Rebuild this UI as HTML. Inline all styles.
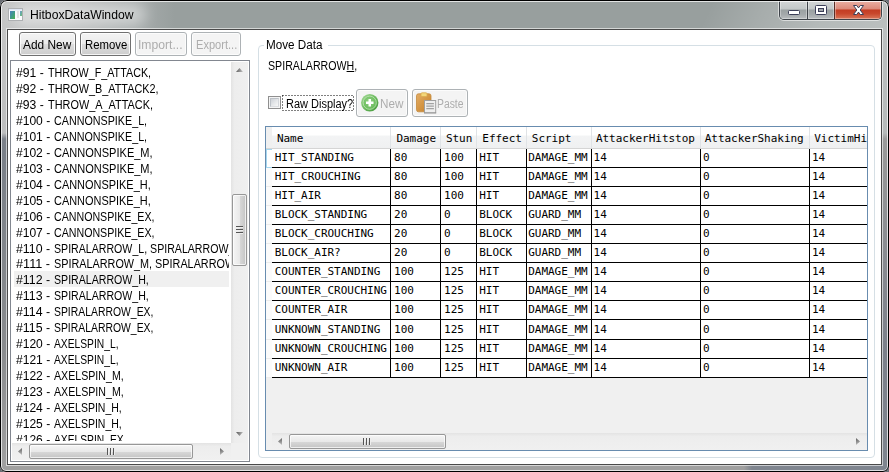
<!DOCTYPE html>
<html>
<head>
<meta charset="utf-8">
<title>HitboxDataWindow</title>
<style>
html,body{margin:0;padding:0;}
body{width:889px;height:472px;overflow:hidden;background:#6a6e74;position:relative;font-family:"Liberation Sans",sans-serif;font-size:12px;color:#000;}
.abs{position:absolute;}
#win{position:absolute;left:0;top:0;width:889px;height:472px;border-radius:7px 7px 6px 6px;overflow:hidden;background:#989f9e;}
#edge{position:absolute;left:0;top:0;width:887px;height:470px;border:1px solid #000;border-radius:7px 7px 6px 6px;box-shadow:inset 0 0 0 1px rgba(255,255,255,.72);pointer-events:none;}
/* title bar glass */
#tb{position:absolute;left:0;top:0;width:889px;height:29px;
 background:
  linear-gradient(115deg,rgba(255,255,255,0) 0,rgba(255,255,255,0) 79%,rgba(255,255,255,.14) 85%,rgba(255,255,255,.28) 92%,rgba(255,255,255,.34) 100%),
  linear-gradient(to right,#c5c6c6 0,#c1c3c3 60px,#a9aeae 130px,#989f9e 175px,#989f9e 100%);}
#glow{position:absolute;left:14px;top:4px;width:132px;height:21px;border-radius:10px;background:rgba(255,255,255,.45);filter:blur(7px);}
#fl{position:absolute;left:0;top:29px;width:8px;height:443px;background:linear-gradient(to bottom,#c4c5c5 0,#bdbebe 104px,#7c8189 110px,#7a8088 125px,#8a8c8e 321px,#a0a0a0 436px,#a0a0a0 100%);}
#fr{position:absolute;left:881px;top:29px;width:8px;height:443px;background:linear-gradient(to bottom,#bcc0c0 0,#b6baba 104px,#9b9b9b 110px,#989898 125px,#7c808a 321px,#7f858f 100%);}
#fb{position:absolute;left:0;top:464px;width:889px;height:8px;background:linear-gradient(to right,#a0a0a0 0,#a0a0a0 744px,#7f858f 752px,#7f858f 100%);}
#client{position:absolute;left:7px;top:29px;width:873px;height:434px;border:1px solid #4a4a4a;outline:1px solid rgba(255,255,255,.58);background:#fff;}
#title{position:absolute;left:29px;top:6px;height:16px;line-height:16px;font-size:12px;white-space:nowrap;color:#000;}
/* caption buttons */
#cap{position:absolute;left:779px;top:1px;width:101px;height:18px;border:1px solid #3f444a;border-top:none;border-radius:0 0 5px 5px;overflow:hidden;box-shadow:0 0 0 1px rgba(255,255,255,.55);}
#cap div{position:absolute;top:0;height:18px;box-shadow:inset 0 0 0 1px rgba(255,255,255,.35);}
#cmin{left:0;width:27px;background:linear-gradient(to bottom,#d3d6d6 0,#c3c8c8 44%,#9ba1a2 50%,#a4a9ab 75%,#b9bdbf 100%);border-right:1px solid #3f444a;}
#cmax{left:28px;width:26px;background:linear-gradient(to bottom,#d3d6d6 0,#c3c8c8 44%,#9ba1a2 50%,#a4a9ab 75%,#b9bdbf 100%);border-right:1px solid #5a2d25;}
#ccl{left:55px;width:46px;background:linear-gradient(to bottom,#eab0a3 0,#dc8a7a 44%,#c33d23 50%,#c8472c 70%,#d9775a 100%);}
#capg{position:absolute;left:779px;top:0;}
#ico{position:absolute;left:8px;top:8px;}
#pg{position:absolute;left:-8px;top:-30px;width:889px;height:472px;}
/* generic controls */
.btn{position:absolute;box-sizing:border-box;border:1px solid #707070;border-radius:3px;background:linear-gradient(to bottom,#f3f3f3 0,#ebebeb 50%,#dddddd 50%,#cdcdcd 100%);box-shadow:inset 0 0 0 1px rgba(255,255,255,.8);text-align:center;white-space:nowrap;}
.btn.dis{border-color:#adb2b5;background:#f4f4f4;color:#adadad;box-shadow:inset 0 0 0 1px #fcfcfc;}
.t{position:absolute;display:block;white-space:nowrap;line-height:16px;height:16px;transform-origin:0 0;}
/* listbox */
#lb{position:absolute;left:10px;top:60px;width:238px;height:400px;border:1px solid #828790;background:#fff;overflow:hidden;}
#lbv{position:absolute;left:1px;top:1px;width:217px;height:379px;overflow:hidden;}
.li{position:absolute;left:0;width:217px;height:16px;line-height:16px;white-space:nowrap;}
.li.sel:before{content:"";position:absolute;left:2px;top:0;width:215px;height:16px;background:#f0f0f0;}
.sbv{position:absolute;background:linear-gradient(to right,#e3e3e3 0,#ededed 20%,#f0f0f0 100%);}
.sbh{position:absolute;background:linear-gradient(to bottom,#e3e3e3 0,#ededed 20%,#f0f0f0 100%);}
.thh{position:absolute;box-sizing:border-box;border:1px solid #979797;border-radius:2px;background:linear-gradient(to bottom,#f5f5f5 0,#e9e9e9 50%,#d9d9d9 50%,#c4c4c4 100%);box-shadow:inset 0 0 0 1px rgba(255,255,255,.7);}
.thv{position:absolute;box-sizing:border-box;border:1px solid #979797;border-radius:2px;background:linear-gradient(to right,#f5f5f5 0,#e9e9e9 50%,#d9d9d9 50%,#c4c4c4 100%);box-shadow:inset 0 0 0 1px rgba(255,255,255,.7);}
.au,.ad{position:absolute;width:7px;height:4px;background:linear-gradient(100deg,#676767 15%,#bdbdbd 95%);}
.al,.ar{position:absolute;width:4px;height:7px;background:linear-gradient(170deg,#6b6b6b 15%,#bdbdbd 95%);}
.au{clip-path:polygon(50% 0,100% 100%,0 100%);}
.ad{clip-path:polygon(0 0,100% 0,50% 100%);}
.al{clip-path:polygon(100% 0,100% 100%,0 50%);}
.ar{clip-path:polygon(0 0,100% 50%,0 100%);}
/* groupbox */
#gb{position:absolute;left:258px;top:45px;width:615px;height:411px;border:1px solid #d5dfe5;border-radius:4px;box-shadow:inset 0 0 0 1px #fff;}
#gbh{position:absolute;left:264px;top:36px;width:64px;height:18px;background:#fff;}
#cb{position:absolute;left:268px;top:96px;width:11px;height:11px;border:1px solid #8f8f8f;background:#f4f4f4;}
#cb:after{content:"";position:absolute;left:1px;top:1px;width:7px;height:7px;border:1px solid #bcc1c7;border-right-color:#d4d7db;border-bottom-color:#dcdee1;background:linear-gradient(135deg,#cdd1d7 0,#e6e8ea 55%,#f7f7f7 100%);}
.griph{position:absolute;width:8px;height:7px;background:linear-gradient(to right,#555 0,#555 1px,#eee 1px,#eee 2px,transparent 2px,transparent 3px,#555 3px,#555 4px,#eee 4px,#eee 5px,transparent 5px,transparent 6px,#555 6px,#555 7px,#eee 7px,#eee 8px);}
.gripv{position:absolute;width:7px;height:8px;background:linear-gradient(to bottom,#555 0,#555 1px,#eee 1px,#eee 2px,transparent 2px,transparent 3px,#555 3px,#555 4px,#eee 4px,#eee 5px,transparent 5px,transparent 6px,#555 6px,#555 7px,#eee 7px,#eee 8px);}
/* datagrid */
#dg{position:absolute;left:265px;top:126px;width:601px;height:323px;border:1px solid #688caf;background:#f0f0f0;overflow:hidden;font-family:"DejaVu Sans Mono","Liberation Mono",monospace;font-size:11px;letter-spacing:-0.02px;}
#dgh{position:absolute;left:0;top:0;width:601px;height:22px;background:linear-gradient(to bottom,#ffffff 0,#ffffff 40%,#f3f4f5 41%,#eff0f1 100%);border-bottom:1px solid #d5d5d5;box-sizing:border-box;}
.hc{position:absolute;top:0;height:21px;box-sizing:border-box;border-right:1px solid #e0e3e6;overflow:hidden;white-space:nowrap;}
.hc span{position:absolute;top:5px;line-height:14px;}
.row{position:absolute;left:0;width:601px;height:19px;}
.rh{position:absolute;left:0;top:0;width:6px;height:18px;background:#fbfbfb;border-bottom:1px solid #ececec;}
.rh.cur{left:0;width:5px;height:17px;background:#fff;border:1px solid #a5d7f0;border-right:none;}
#dgc{position:absolute;left:0;top:0;width:6px;height:21px;background:#f0f0f0;}
.c{position:absolute;top:0;height:18px;box-sizing:content-box;background:#fff;border-right:1px solid #000;border-bottom:1px solid #000;overflow:hidden;white-space:nowrap;}
.c span{position:absolute;top:2px;line-height:14px;}
</style>
</head>
<body>
<div id="win">
 <div id="tb"><div id="glow"></div></div>
 <div id="fl"></div><div id="fr"></div><div id="fb"></div>
 <!--TITLE--><span class="t" style="left:29.50px;top:7px;transform:scaleX(1.0139);">HitboxDataWindow</span><!--/TITLE-->
 <div id="cap"><div id="cmin"></div><div id="cmax"></div><div id="ccl"></div></div>
 <svg id="capg" width="103" height="20" viewBox="779 0 103 20"><rect x="788.5" y="10.5" width="11" height="4" rx="1" fill="#fff" stroke="#3c3f58"/><rect x="815.5" y="5.5" width="11" height="9" rx="1" fill="#fff" stroke="#3c3f58"/><rect x="818.5" y="8.5" width="5" height="3" fill="#a3a7ab" stroke="#3c3f58"/><path d="M853.5 5.5h3.2l1.8 2.4 1.8-2.4h3.2l-3.3 4.5 3.3 4.5h-3.2l-1.8-2.4-1.8 2.4h-3.2l3.3-4.5z" fill="#fff" stroke="#3c3f58" stroke-linejoin="round"/></svg>
 <svg id="ico" width="15" height="13" viewBox="0 0 15 13"><defs><linearGradient id="ig" x1="0" y1="0" x2="1" y2="1"><stop offset="0" stop-color="#4f7fc0"/><stop offset=".5" stop-color="#3f9a8a"/><stop offset="1" stop-color="#4fb04a"/></linearGradient></defs><rect x=".5" y=".5" width="14" height="12" fill="#fbfbfd" stroke="#aeb0b2"/><rect x="1" y="1" width="13" height="1.5" fill="#dfe6f3"/><rect x="2" y="3" width="5" height="8" fill="url(#ig)"/><rect x="9" y="3" width="2" height="7" fill="#e3e3e3"/><rect x="12" y="3" width="2" height="5" fill="url(#ig)" opacity=".8"/></svg>
 <div id="client"><div id="pg">
<!--CLIENT-->
<div class="btn" style="left:19px;top:32px;width:57px;height:24px"><span class="t" style="left:3.40px;top:4px;transform:scaleX(0.9913);">Add New</span></div>
<div class="btn" style="left:80px;top:32px;width:51px;height:24px"><span class="t" style="left:3.80px;top:4px;transform:scaleX(0.9465);">Remove</span></div>
<div class="btn dis" style="left:135px;top:32px;width:52px;height:24px"><span class="t" style="left:2.49px;top:4px;transform:scaleX(1.0123);">Import...</span></div>
<div class="btn dis" style="left:191px;top:32px;width:50px;height:24px"><span class="t" style="left:3.50px;top:4px;transform:scaleX(0.9222);">Export...</span></div>
<div id="lb"><div id="lbv">
<div class="li" style="top:2px"><span class="t" style="left:4.20px;top:1px;transform:scaleX(1.0134);">#91&nbsp;-&nbsp;</span><span class="t" style="left:35.70px;top:1px;transform:scaleX(0.8974);">THROW_F_ATTACK,</span></div>
<div class="li" style="top:18px"><span class="t" style="left:4.20px;top:1px;transform:scaleX(1.0134);">#92&nbsp;-&nbsp;</span><span class="t" style="left:35.70px;top:1px;transform:scaleX(0.9040);">THROW_B_ATTACK2,</span></div>
<div class="li" style="top:34px"><span class="t" style="left:4.20px;top:1px;transform:scaleX(1.0134);">#93&nbsp;-&nbsp;</span><span class="t" style="left:35.70px;top:1px;transform:scaleX(0.9086);">THROW_A_ATTACK,</span></div>
<div class="li" style="top:50px"><span class="t" style="left:4.20px;top:1px;transform:scaleX(1.0038);">#100&nbsp;-&nbsp;</span><span class="t" style="left:42.10px;top:1px;transform:scaleX(0.8949);">CANNONSPIKE_L,</span></div>
<div class="li" style="top:66px"><span class="t" style="left:4.20px;top:1px;transform:scaleX(1.0038);">#101&nbsp;-&nbsp;</span><span class="t" style="left:42.10px;top:1px;transform:scaleX(0.8949);">CANNONSPIKE_L,</span></div>
<div class="li" style="top:82px"><span class="t" style="left:4.20px;top:1px;transform:scaleX(1.0038);">#102&nbsp;-&nbsp;</span><span class="t" style="left:42.10px;top:1px;transform:scaleX(0.9185);">CANNONSPIKE_M,</span></div>
<div class="li" style="top:97px"><span class="t" style="left:4.20px;top:2px;transform:scaleX(1.0038);">#103&nbsp;-&nbsp;</span><span class="t" style="left:42.10px;top:2px;transform:scaleX(0.9185);">CANNONSPIKE_M,</span></div>
<div class="li" style="top:113px"><span class="t" style="left:4.20px;top:2px;transform:scaleX(1.0038);">#104&nbsp;-&nbsp;</span><span class="t" style="left:42.10px;top:2px;transform:scaleX(0.9121);">CANNONSPIKE_H,</span></div>
<div class="li" style="top:129px"><span class="t" style="left:4.20px;top:2px;transform:scaleX(1.0038);">#105&nbsp;-&nbsp;</span><span class="t" style="left:42.10px;top:2px;transform:scaleX(0.9121);">CANNONSPIKE_H,</span></div>
<div class="li" style="top:145px"><span class="t" style="left:4.20px;top:2px;transform:scaleX(1.0038);">#106&nbsp;-&nbsp;</span><span class="t" style="left:42.10px;top:2px;transform:scaleX(0.8865);">CANNONSPIKE_EX,</span></div>
<div class="li" style="top:161px"><span class="t" style="left:4.20px;top:2px;transform:scaleX(1.0038);">#107&nbsp;-&nbsp;</span><span class="t" style="left:42.10px;top:2px;transform:scaleX(0.8865);">CANNONSPIKE_EX,</span></div>
<div class="li" style="top:177px"><span class="t" style="left:4.20px;top:2px;transform:scaleX(1.0283);">#110&nbsp;-&nbsp;</span><span class="t" style="left:42.10px;top:2px;transform:scaleX(0.8838);">SPIRALARROW_L, SPIRALARROW_L,</span></div>
<div class="li" style="top:193px"><span class="t" style="left:4.20px;top:1px;transform:scaleX(1.0540);">#111&nbsp;-&nbsp;</span><span class="t" style="left:42.10px;top:1px;transform:scaleX(0.9026);">SPIRALARROW_M, SPIRALARROW_M,</span></div>
<div class="li sel" style="top:209px"><span class="t" style="left:4.20px;top:1px;transform:scaleX(1.0283);">#112&nbsp;-&nbsp;</span><span class="t" style="left:42.10px;top:1px;transform:scaleX(0.8830);">SPIRALARROW_H,</span></div>
<div class="li" style="top:225px"><span class="t" style="left:4.20px;top:1px;transform:scaleX(1.0283);">#113&nbsp;-&nbsp;</span><span class="t" style="left:42.10px;top:1px;transform:scaleX(0.8830);">SPIRALARROW_H,</span></div>
<div class="li" style="top:241px"><span class="t" style="left:4.20px;top:1px;transform:scaleX(1.0283);">#114&nbsp;-&nbsp;</span><span class="t" style="left:42.10px;top:1px;transform:scaleX(0.8665);">SPIRALARROW_EX,</span></div>
<div class="li" style="top:257px"><span class="t" style="left:4.20px;top:1px;transform:scaleX(1.0283);">#115&nbsp;-&nbsp;</span><span class="t" style="left:42.10px;top:1px;transform:scaleX(0.8665);">SPIRALARROW_EX,</span></div>
<div class="li" style="top:273px"><span class="t" style="left:4.20px;top:1px;transform:scaleX(1.0038);">#120&nbsp;-&nbsp;</span><span class="t" style="left:42.10px;top:1px;transform:scaleX(0.8555);">AXELSPIN_L,</span></div>
<div class="li" style="top:289px"><span class="t" style="left:4.20px;top:1px;transform:scaleX(1.0038);">#121&nbsp;-&nbsp;</span><span class="t" style="left:42.10px;top:1px;transform:scaleX(0.8555);">AXELSPIN_L,</span></div>
<div class="li" style="top:305px"><span class="t" style="left:4.20px;top:1px;transform:scaleX(1.0038);">#122&nbsp;-&nbsp;</span><span class="t" style="left:42.10px;top:1px;transform:scaleX(0.8856);">AXELSPIN_M,</span></div>
<div class="li" style="top:321px"><span class="t" style="left:4.20px;top:1px;transform:scaleX(1.0038);">#123&nbsp;-&nbsp;</span><span class="t" style="left:42.10px;top:1px;transform:scaleX(0.8856);">AXELSPIN_M,</span></div>
<div class="li" style="top:337px"><span class="t" style="left:4.20px;top:1px;transform:scaleX(1.0038);">#124&nbsp;-&nbsp;</span><span class="t" style="left:42.10px;top:1px;transform:scaleX(0.8762);">AXELSPIN_H,</span></div>
<div class="li" style="top:353px"><span class="t" style="left:4.20px;top:1px;transform:scaleX(1.0038);">#125&nbsp;-&nbsp;</span><span class="t" style="left:42.10px;top:1px;transform:scaleX(0.8762);">AXELSPIN_H,</span></div>
<div class="li" style="top:369px"><span class="t" style="left:4.20px;top:1px;transform:scaleX(1.0038);">#126&nbsp;-&nbsp;</span><span class="t" style="left:42.10px;top:1px;transform:scaleX(0.8557);">AXELSPIN_EX,</span></div>
</div>
<div class="sbv" style="left:220px;top:1px;width:17px;height:381px"></div>
<div class="au" style="left:225px;top:7px"></div>
<div class="ad" style="left:225px;top:371px"></div>
<div class="thv" style="left:221px;top:133px;width:15px;height:72px"></div>
<div class="gripv" style="left:225px;top:165px"></div>
<div class="sbh" style="left:1px;top:382px;width:219px;height:17px"></div>
<div class="al" style="left:7px;top:387px"></div>
<div class="ar" style="left:209px;top:387px"></div>
<div class="thh" style="left:18px;top:383px;width:164px;height:15px"></div>
<div class="griph" style="left:96px;top:387px"></div>
<div class="abs" style="left:220px;top:382px;width:17px;height:17px;background:#f0f0f0"></div>
</div>
<div id="gb"></div>
<div id="gbh"></div>
<span class="t" style="left:266.40px;top:37px;transform:scaleX(0.9734);">Move Data</span>
<span class="t" style="left:268.30px;top:58px;transform:scaleX(0.8859);">SPIRALARROW<u>H</u>,</span>
<div id="cb"></div>
<svg class="abs" style="left:282px;top:95px" width="72" height="16" viewBox="0 0 72 16"><rect x=".5" y=".5" width="71" height="15" fill="none" stroke="#000" stroke-width="1" stroke-dasharray="1 2"/></svg>
<span class="t" style="left:285.80px;top:96px;transform:scaleX(0.9161);">Raw Display?</span>
<div class="btn dis" style="left:356px;top:89px;width:52px;height:28px"><svg class="abs" style="left:3px;top:3px" width="20" height="20" viewBox="0 0 20 20"><defs><linearGradient id="g1" x1="0" y1="0" x2="1" y2="1"><stop offset="0" stop-color="#a9dc9b"/><stop offset=".5" stop-color="#6cba5e"/><stop offset="1" stop-color="#3f9436"/></linearGradient><radialGradient id="g2" cx="45%" cy="40%" r="60%"><stop offset="0" stop-color="#8fd281"/><stop offset="1" stop-color="#68b95a"/></radialGradient></defs><circle cx="9.75" cy="9.75" r="8.7" fill="url(#g1)"/><circle cx="9.75" cy="9.75" r="6.6" fill="url(#g2)" stroke="#bfe6b5" stroke-width=".8"/><path d="M8.5 6h2.5v2.5h2.5v2.5h-2.5v2.5H8.5v-2.5H6V8.5h2.5z" fill="#fff"/></svg><span class="t" style="left:23.10px;top:6px;transform:scaleX(0.9737);">New</span></div>
<div class="btn dis" style="left:412px;top:89px;width:56px;height:28px"><svg class="abs" style="left:2px;top:2px" width="22" height="22" viewBox="0 0 22 22"><defs><linearGradient id="p1" x1="0" y1="0" x2="1" y2="1"><stop offset="0" stop-color="#e3ad66"/><stop offset=".6" stop-color="#d2923f"/><stop offset="1" stop-color="#bd7a2a"/></linearGradient></defs><rect x="1.5" y="1.8" width="14.5" height="18" rx="2" fill="url(#p1)" stroke="#c48a3e" stroke-width=".8"/><rect x="6" y=".8" width="6" height="3.8" rx="1" fill="#f3d77a" stroke="#d9a94e" stroke-width=".8"/><rect x="9.5" y="8.5" width="11.2" height="12.3" fill="#efefef" stroke="#a0a0a0" stroke-width="1"/><path d="M9 21h12.2" stroke="#8f8f8f" stroke-width="1" opacity=".7"/><path d="M11.3 11.7h7.6M11.3 14.2h7.6M11.3 16.7h7.6" stroke="#a2a2a2" stroke-width="1.3"/></svg><span class="t" style="left:23.90px;top:6px;transform:scaleX(0.8642);">Paste</span></div>
<div id="dg">
<div id="dgh"><div id="dgc"></div>
<div class="hc" style="left:6px;width:119px"><span style="left:4.9px">Name</span></div>
<div class="hc" style="left:125px;width:50px"><span style="left:5.4px">Damage</span></div>
<div class="hc" style="left:175px;width:36px"><span style="left:4.9px">Stun</span></div>
<div class="hc" style="left:211px;width:50px"><span style="left:5.3px">Effect</span></div>
<div class="hc" style="left:261px;width:65px"><span style="left:4.8px">Script</span></div>
<div class="hc" style="left:326px;width:109px"><span style="left:3.9px">AttackerHitstop</span></div>
<div class="hc" style="left:435px;width:109px"><span style="left:3.7px">AttackerShaking</span></div>
<div class="hc" style="left:544px;width:110px"><span style="left:4.2px">VictimHitstop</span></div>
</div>
<div class="row" style="top:22px;"><div class="rh cur" style=""></div>
<div class="c" style="left:6px;width:118px;"><span style="left:2.7px;">HIT_STANDING</span></div>
<div class="c" style="left:125px;width:49px;"><span style="left:3.1px;">80</span></div>
<div class="c" style="left:175px;width:35px;"><span style="left:3.1px;">100</span></div>
<div class="c" style="left:211px;width:49px;"><span style="left:2.2px;">HIT</span></div>
<div class="c" style="left:261px;width:64px;"><span style="left:1.2px;">DAMAGE_MM</span></div>
<div class="c" style="left:326px;width:108px;"><span style="left:1.6px;">14</span></div>
<div class="c" style="left:435px;width:108px;"><span style="left:2.1px;">0</span></div>
<div class="c" style="left:544px;width:109px;"><span style="left:1.9px;">14</span></div>
</div>
<div class="row" style="top:41px;"><div class="rh" style=""></div>
<div class="c" style="left:6px;width:118px;"><span style="left:2.7px;">HIT_CROUCHING</span></div>
<div class="c" style="left:125px;width:49px;"><span style="left:3.1px;">80</span></div>
<div class="c" style="left:175px;width:35px;"><span style="left:3.1px;">100</span></div>
<div class="c" style="left:211px;width:49px;"><span style="left:2.2px;">HIT</span></div>
<div class="c" style="left:261px;width:64px;"><span style="left:1.2px;">DAMAGE_MM</span></div>
<div class="c" style="left:326px;width:108px;"><span style="left:1.6px;">14</span></div>
<div class="c" style="left:435px;width:108px;"><span style="left:2.1px;">0</span></div>
<div class="c" style="left:544px;width:109px;"><span style="left:1.9px;">14</span></div>
</div>
<div class="row" style="top:60px;"><div class="rh" style=""></div>
<div class="c" style="left:6px;width:118px;"><span style="left:2.7px;">HIT_AIR</span></div>
<div class="c" style="left:125px;width:49px;"><span style="left:3.1px;">80</span></div>
<div class="c" style="left:175px;width:35px;"><span style="left:3.1px;">100</span></div>
<div class="c" style="left:211px;width:49px;"><span style="left:2.2px;">HIT</span></div>
<div class="c" style="left:261px;width:64px;"><span style="left:1.2px;">DAMAGE_MM</span></div>
<div class="c" style="left:326px;width:108px;"><span style="left:1.6px;">14</span></div>
<div class="c" style="left:435px;width:108px;"><span style="left:2.1px;">0</span></div>
<div class="c" style="left:544px;width:109px;"><span style="left:1.9px;">14</span></div>
</div>
<div class="row" style="top:79px;"><div class="rh" style=""></div>
<div class="c" style="left:6px;width:118px;"><span style="left:2.7px;">BLOCK_STANDING</span></div>
<div class="c" style="left:125px;width:49px;"><span style="left:3.1px;">20</span></div>
<div class="c" style="left:175px;width:35px;"><span style="left:3.1px;">0</span></div>
<div class="c" style="left:211px;width:49px;"><span style="left:2.2px;">BLOCK</span></div>
<div class="c" style="left:261px;width:64px;"><span style="left:1.2px;">GUARD_MM</span></div>
<div class="c" style="left:326px;width:108px;"><span style="left:1.6px;">14</span></div>
<div class="c" style="left:435px;width:108px;"><span style="left:2.1px;">0</span></div>
<div class="c" style="left:544px;width:109px;"><span style="left:1.9px;">14</span></div>
</div>
<div class="row" style="top:98px;"><div class="rh" style=""></div>
<div class="c" style="left:6px;width:118px;"><span style="left:2.7px;">BLOCK_CROUCHING</span></div>
<div class="c" style="left:125px;width:49px;"><span style="left:3.1px;">20</span></div>
<div class="c" style="left:175px;width:35px;"><span style="left:3.1px;">0</span></div>
<div class="c" style="left:211px;width:49px;"><span style="left:2.2px;">BLOCK</span></div>
<div class="c" style="left:261px;width:64px;"><span style="left:1.2px;">GUARD_MM</span></div>
<div class="c" style="left:326px;width:108px;"><span style="left:1.6px;">14</span></div>
<div class="c" style="left:435px;width:108px;"><span style="left:2.1px;">0</span></div>
<div class="c" style="left:544px;width:109px;"><span style="left:1.9px;">14</span></div>
</div>
<div class="row" style="top:117px;"><div class="rh" style=""></div>
<div class="c" style="left:6px;width:118px;"><span style="left:2.7px;">BLOCK_AIR?</span></div>
<div class="c" style="left:125px;width:49px;"><span style="left:3.1px;">20</span></div>
<div class="c" style="left:175px;width:35px;"><span style="left:3.1px;">0</span></div>
<div class="c" style="left:211px;width:49px;"><span style="left:2.2px;">BLOCK</span></div>
<div class="c" style="left:261px;width:64px;"><span style="left:1.2px;">GUARD_MM</span></div>
<div class="c" style="left:326px;width:108px;"><span style="left:1.6px;">14</span></div>
<div class="c" style="left:435px;width:108px;"><span style="left:2.1px;">0</span></div>
<div class="c" style="left:544px;width:109px;"><span style="left:1.9px;">14</span></div>
</div>
<div class="row" style="top:136px;"><div class="rh" style=""></div>
<div class="c" style="left:6px;width:118px;"><span style="left:2.7px;">COUNTER_STANDING</span></div>
<div class="c" style="left:125px;width:49px;"><span style="left:3.1px;">100</span></div>
<div class="c" style="left:175px;width:35px;"><span style="left:3.1px;">125</span></div>
<div class="c" style="left:211px;width:49px;"><span style="left:2.2px;">HIT</span></div>
<div class="c" style="left:261px;width:64px;"><span style="left:1.2px;">DAMAGE_MM</span></div>
<div class="c" style="left:326px;width:108px;"><span style="left:1.6px;">14</span></div>
<div class="c" style="left:435px;width:108px;"><span style="left:2.1px;">0</span></div>
<div class="c" style="left:544px;width:109px;"><span style="left:1.9px;">14</span></div>
</div>
<div class="row" style="top:155px;"><div class="rh" style=""></div>
<div class="c" style="left:6px;width:118px;"><span style="left:2.7px;">COUNTER_CROUCHING</span></div>
<div class="c" style="left:125px;width:49px;"><span style="left:3.1px;">100</span></div>
<div class="c" style="left:175px;width:35px;"><span style="left:3.1px;">125</span></div>
<div class="c" style="left:211px;width:49px;"><span style="left:2.2px;">HIT</span></div>
<div class="c" style="left:261px;width:64px;"><span style="left:1.2px;">DAMAGE_MM</span></div>
<div class="c" style="left:326px;width:108px;"><span style="left:1.6px;">14</span></div>
<div class="c" style="left:435px;width:108px;"><span style="left:2.1px;">0</span></div>
<div class="c" style="left:544px;width:109px;"><span style="left:1.9px;">14</span></div>
</div>
<div class="row" style="top:174px;"><div class="rh" style=""></div>
<div class="c" style="left:6px;width:118px;"><span style="left:2.7px;">COUNTER_AIR</span></div>
<div class="c" style="left:125px;width:49px;"><span style="left:3.1px;">100</span></div>
<div class="c" style="left:175px;width:35px;"><span style="left:3.1px;">125</span></div>
<div class="c" style="left:211px;width:49px;"><span style="left:2.2px;">HIT</span></div>
<div class="c" style="left:261px;width:64px;"><span style="left:1.2px;">DAMAGE_MM</span></div>
<div class="c" style="left:326px;width:108px;"><span style="left:1.6px;">14</span></div>
<div class="c" style="left:435px;width:108px;"><span style="left:2.1px;">0</span></div>
<div class="c" style="left:544px;width:109px;"><span style="left:1.9px;">14</span></div>
</div>
<div class="row" style="top:193px;height:19px;"><div class="rh" style="height:19px;"></div>
<div class="c" style="left:6px;width:118px;height:19px;"><span style="left:2.7px;top:3px">UNKNOWN_STANDING</span></div>
<div class="c" style="left:125px;width:49px;height:19px;"><span style="left:3.1px;top:3px">100</span></div>
<div class="c" style="left:175px;width:35px;height:19px;"><span style="left:3.1px;top:3px">125</span></div>
<div class="c" style="left:211px;width:49px;height:19px;"><span style="left:2.2px;top:3px">HIT</span></div>
<div class="c" style="left:261px;width:64px;height:19px;"><span style="left:1.2px;top:3px">DAMAGE_MM</span></div>
<div class="c" style="left:326px;width:108px;height:19px;"><span style="left:1.6px;top:3px">14</span></div>
<div class="c" style="left:435px;width:108px;height:19px;"><span style="left:2.1px;top:3px">0</span></div>
<div class="c" style="left:544px;width:109px;height:19px;"><span style="left:1.9px;top:3px">14</span></div>
</div>
<div class="row" style="top:213px;"><div class="rh" style=""></div>
<div class="c" style="left:6px;width:118px;"><span style="left:2.7px;">UNKNOWN_CROUCHING</span></div>
<div class="c" style="left:125px;width:49px;"><span style="left:3.1px;">100</span></div>
<div class="c" style="left:175px;width:35px;"><span style="left:3.1px;">125</span></div>
<div class="c" style="left:211px;width:49px;"><span style="left:2.2px;">HIT</span></div>
<div class="c" style="left:261px;width:64px;"><span style="left:1.2px;">DAMAGE_MM</span></div>
<div class="c" style="left:326px;width:108px;"><span style="left:1.6px;">14</span></div>
<div class="c" style="left:435px;width:108px;"><span style="left:2.1px;">0</span></div>
<div class="c" style="left:544px;width:109px;"><span style="left:1.9px;">14</span></div>
</div>
<div class="row" style="top:232px;"><div class="rh" style=""></div>
<div class="c" style="left:6px;width:118px;"><span style="left:2.7px;">UNKNOWN_AIR</span></div>
<div class="c" style="left:125px;width:49px;"><span style="left:3.1px;">100</span></div>
<div class="c" style="left:175px;width:35px;"><span style="left:3.1px;">125</span></div>
<div class="c" style="left:211px;width:49px;"><span style="left:2.2px;">HIT</span></div>
<div class="c" style="left:261px;width:64px;"><span style="left:1.2px;">DAMAGE_MM</span></div>
<div class="c" style="left:326px;width:108px;"><span style="left:1.6px;">14</span></div>
<div class="c" style="left:435px;width:108px;"><span style="left:2.1px;">0</span></div>
<div class="c" style="left:544px;width:109px;"><span style="left:1.9px;">14</span></div>
</div>
<div class="sbh" style="left:6px;top:306px;width:595px;height:17px"></div>
<div class="al" style="left:12px;top:311px"></div>
<div class="ar" style="left:590px;top:311px"></div>
<div class="thh" style="left:23px;top:307px;width:157px;height:15px"></div>
<div class="griph" style="left:97px;top:311px"></div>
</div>
<!--/CLIENT-->
 </div></div>
 <div id="edge"></div>
</div>
</body>
</html>
